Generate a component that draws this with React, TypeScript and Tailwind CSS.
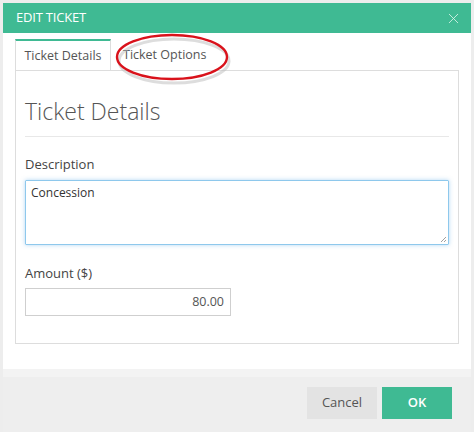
import { X } from "lucide-react";

export default function App() {
  return (
    <div className="h-[432px] w-[474px] bg-[#ededed] px-[3px] pt-[3px] font-['Open_Sans',sans-serif] flex flex-col">
      {/* Header */}
      <div className="h-[30px] bg-[#3fba93] flex items-center justify-between pl-[13px] pr-[9px]">
        <span className="text-white text-[13px] tracking-[-0.2px]">EDIT TICKET</span>
        <X className="text-[#d9f3ea]" size={17} strokeWidth={1.2} />
      </div>

      {/* Body */}
      <div className="relative h-[336px] bg-white px-[12px] pt-[6px]">
        <div className="flex">
          <div className="relative z-10 -mb-px h-[31px] w-[96px] border-t-2 border-x border-[#3fba93] border-x-[#dddddd] bg-white pt-[6px] text-center text-[12.5px] text-[#555]">
            Ticket Details
          </div>
          <div className="h-[31px] pl-[12px] pt-[7px] text-[12.5px] text-[#555]">Ticket Options</div>
        </div>
        <div className="h-[274px] border border-[#dddddd] px-[9px]">
          <div className="pt-[24px] pb-[9px] text-[23px] font-light leading-[32px] text-[#555]">Ticket Details</div>
          <div className="border-t border-[#e8e8e8]" />
          <div className="mt-[18px] text-[13px] leading-[18px] text-[#444]">Description</div>
          <div className="relative mt-[7px] h-[65px] rounded-[1px] border border-[#8ec8ec] px-[5px] pt-[3px] text-[12px] text-[#333] shadow-[0_0_4px_rgba(102,175,233,0.5)]">
            Concession
            <svg className="absolute bottom-[1px] right-[1px]" width="8" height="8" viewBox="0 0 8 8">
              <path d="M7 2 L2 7 M7 5 L5 7" stroke="#888" strokeWidth="0.8" />
            </svg>
          </div>
          <div className="mt-[19px] text-[13px] leading-[18px] text-[#444]">Amount ($)</div>
          <div className="mt-[6px] flex h-[28px] w-[206px] items-center justify-end border border-[#cfcfcf] pr-[6px] text-[12.5px] text-[#555]">
            80.00
          </div>
        </div>

        {/* red annotation ellipse */}
        <svg className="absolute left-[108px] top-0 pointer-events-none" width="122" height="52" viewBox="0 0 122 52">
          <ellipse cx="61" cy="26" rx="55" ry="22" fill="none" stroke="#bbb" strokeWidth="3" opacity="0.5" transform="translate(2 2)" />
          <ellipse cx="61" cy="24" rx="55" ry="22" fill="none" stroke="#d9121b" strokeWidth="2.4" />
        </svg>
      </div>

      {/* Footer */}
      <div className="flex-1 bg-[#eeeeee] border-t-[8px] border-[#f3f3f3] flex items-start justify-end gap-[5px] pt-[10px] pr-[19px]">
        <button className="h-[32px] w-[70px] bg-[#e3e3e3] text-[13px] text-[#555]">Cancel</button>
        <button className="h-[32px] w-[70px] bg-[#3fba93] text-[13px] font-semibold text-white">OK</button>
      </div>
    </div>
  );
}
